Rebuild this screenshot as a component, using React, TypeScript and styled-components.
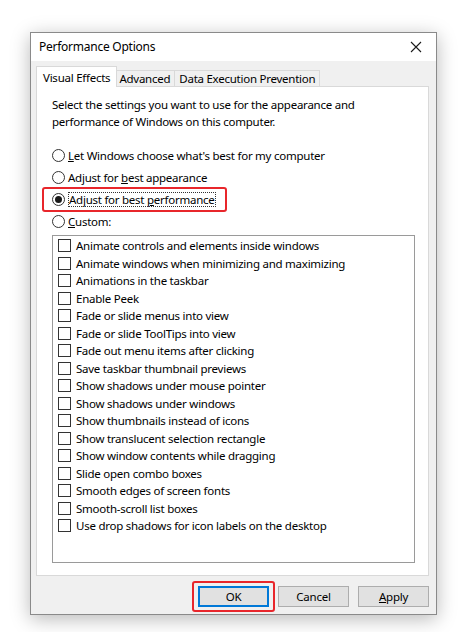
import React from "react";
import styled, { createGlobalStyle } from "styled-components";

const GlobalStyle = createGlobalStyle`
    html, body {
        margin: 0;
        padding: 0;
        background: #ffffff;
    }
    body {
        font-family: "Noto Sans", "Open Sans", Arial, sans-serif;
        font-size: 11.5px;
        letter-spacing: -0.25px;
        color: #000;
    }
`;

const effects = [
    "Animate controls and elements inside windows",
    "Animate windows when minimizing and maximizing",
    "Animations in the taskbar",
    "Enable Peek",
    "Fade or slide menus into view",
    "Fade or slide ToolTips into view",
    "Fade out menu items after clicking",
    "Save taskbar thumbnail previews",
    "Show shadows under mouse pointer",
    "Show shadows under windows",
    "Show thumbnails instead of icons",
    "Show translucent selection rectangle",
    "Show window contents while dragging",
    "Slide open combo boxes",
    "Smooth edges of screen fonts",
    "Smooth-scroll list boxes",
    "Use drop shadows for icon labels on the desktop",
];

const App = () => {
    return (
        <>
            <GlobalStyle />
            <Page>
                <Window>
                    <TitleBar>
                        <Title>Performance Options</Title>
                        <CloseIcon width="12" height="12" viewBox="0 0 12 12">
                            <path d="M1 1 L11 11 M11 1 L1 11" stroke="#1a1a1a" strokeWidth="1.1" />
                        </CloseIcon>
                    </TitleBar>
                    <Body>
                        <TabStrip>
                            <Tab $active>Visual Effects</Tab>
                            <Tab>Advanced</Tab>
                            <Tab>Data Execution Prevention</Tab>
                        </TabStrip>
                        <Panel>
                            <Intro>
                                Select the settings you want to use for the appearance and
                                <br />
                                performance of Windows on this computer.
                            </Intro>
                            <RadioGroup>
                                <RadioRow>
                                    <Radio />
                                    <span><U>L</U>et Windows choose what's best for my computer</span>
                                </RadioRow>
                                <RadioRow>
                                    <Radio />
                                    <span>Adjust for <U>b</U>est appearance</span>
                                </RadioRow>
                                <RadioRow $highlight>
                                    <Radio $checked />
                                    <FocusLabel>Adjust for best <U>p</U>erformance</FocusLabel>
                                </RadioRow>
                                <RadioRow>
                                    <Radio />
                                    <span><U>C</U>ustom:</span>
                                </RadioRow>
                            </RadioGroup>
                            <ListBox>
                                {effects.map((label) => (
                                    <CheckRow key={label}>
                                        <CheckBox />
                                        <span>{label}</span>
                                    </CheckRow>
                                ))}
                            </ListBox>
                        </Panel>
                        <Footer>
                            <DialogButton $primary $highlight>OK</DialogButton>
                            <DialogButton>Cancel</DialogButton>
                            <DialogButton><U>A</U>pply</DialogButton>
                        </Footer>
                    </Body>
                </Window>
            </Page>
        </>
    );
};

export default App;

const Page = styled.div`
    width: 474px;
    height: 632px;
    padding: 32px 0 0 30px;
    box-sizing: border-box;
`;

const Window = styled.div`
    width: 407px;
    height: 583px;
    box-sizing: border-box;
    border: 1px solid #8a8a8a;
    background: #f0f0f0;
    box-shadow: 0 4px 18px rgba(0, 0, 0, 0.28);
    display: flex;
    flex-direction: column;
`;

const TitleBar = styled.div`
    height: 28px;
    background: #ffffff;
    display: flex;
    align-items: center;
    justify-content: space-between;
    padding: 0 14px 0 8px;
    flex-shrink: 0;
`;

const Title = styled.span`
    font-size: 12px;
    color: #000;
    margin-top: -1px;
`;

const CloseIcon = styled.svg`
    display: block;
`;

const Body = styled.div`
    flex: 1;
    display: flex;
    flex-direction: column;
    padding: 6px 7px 0 5px;
`;

const TabStrip = styled.div`
    display: flex;
    align-items: flex-end;
    padding-left: 2px;
    height: 20px;
    position: relative;
    z-index: 1;
    margin-bottom: -1px;
`;

const Tab = styled.div<{ $active?: boolean }>`
    height: ${({ $active }) => ($active ? "21px" : "17px")};
    box-sizing: border-box;
    padding: 0 ${({ $active }) => ($active ? "6px" : "4px")};
    margin: ${({ $active }) => ($active ? "0 -2px 0 -2px" : "0")};
    display: flex;
    align-items: center;
    background: ${({ $active }) => ($active ? "#ffffff" : "#f0f0f0")};
    border: 1px solid #d9d9d9;
    border-bottom: ${({ $active }) => ($active ? "none" : "1px solid #d9d9d9")};
    border-left: ${({ $active }) => ($active ? "1px solid #d9d9d9" : "none")};
    position: relative;
    z-index: ${({ $active }) => ($active ? 2 : 1)};
    white-space: nowrap;
`;

const Panel = styled.div`
    height: 490px;
    box-sizing: border-box;
    background: #ffffff;
    border: 1px solid #d9d9d9;
    padding: 9px 14px 0 15px;
    display: flex;
    flex-direction: column;
`;

const Intro = styled.p`
    margin: 0;
    line-height: 17px;
`;

const RadioGroup = styled.div`
    margin-top: 14px;
    display: flex;
    flex-direction: column;
`;

const RadioRow = styled.label<{ $highlight?: boolean }>`
    height: 22px;
    display: flex;
    align-items: center;
    gap: 3px;
    position: relative;

    ${({ $highlight }) =>
        $highlight &&
        `
        &::after {
            content: "";
            position: absolute;
            left: -10px;
            top: -1px;
            width: 185px;
            height: 25px;
            box-sizing: border-box;
            border: 2.5px solid #e8262b;
            border-radius: 3px;
        }
    `}
`;

const Radio = styled.span<{ $checked?: boolean }>`
    width: 13px;
    height: 13px;
    box-sizing: border-box;
    border-radius: 50%;
    border: 1px solid #333333;
    background: #ffffff;
    display: flex;
    align-items: center;
    justify-content: center;
    flex-shrink: 0;

    &::before {
        content: "";
        width: 7px;
        height: 7px;
        border-radius: 50%;
        background: ${({ $checked }) => ($checked ? "#1a1a1a" : "transparent")};
    }
`;

const FocusLabel = styled.span`
    outline: 1px dotted #333;
    outline-offset: -1px;
    padding: 0 1px;
`;

const U = styled.span`
    text-decoration: underline;
`;

const ListBox = styled.div`
    margin-top: 3px;
    width: 363px;
    height: 328px;
    box-sizing: border-box;
    border: 1px solid #9a9a9a;
    padding: 1px 0 0 5px;
`;

const CheckRow = styled.div`
    height: 17.5px;
    display: flex;
    align-items: center;
    gap: 5px;
    white-space: nowrap;
`;

const CheckBox = styled.span`
    width: 13px;
    height: 13px;
    box-sizing: border-box;
    border: 1px solid #333333;
    background: #ffffff;
    flex-shrink: 0;
`;

const Footer = styled.div`
    display: flex;
    justify-content: flex-end;
    gap: 9px;
    padding: 10px 0 0;
`;

const DialogButton = styled.button<{ $primary?: boolean; $highlight?: boolean }>`
    width: 71px;
    height: 21px;
    font: inherit;
    letter-spacing: inherit;
    color: #000;
    background: #e1e1e1;
    border: 1px solid ${({ $primary }) => ($primary ? "#0078d7" : "#adadad")};
    box-shadow: ${({ $primary }) => ($primary ? "inset 0 0 0 1px #0078d7" : "none")};
    padding: 0;
    position: relative;

    ${({ $highlight }) =>
        $highlight &&
        `
        &::after {
            content: "";
            position: absolute;
            left: -7px;
            top: -6px;
            right: -7px;
            bottom: -6px;
            border: 2.5px solid #e8262b;
            border-radius: 3px;
        }
    `}
`;
